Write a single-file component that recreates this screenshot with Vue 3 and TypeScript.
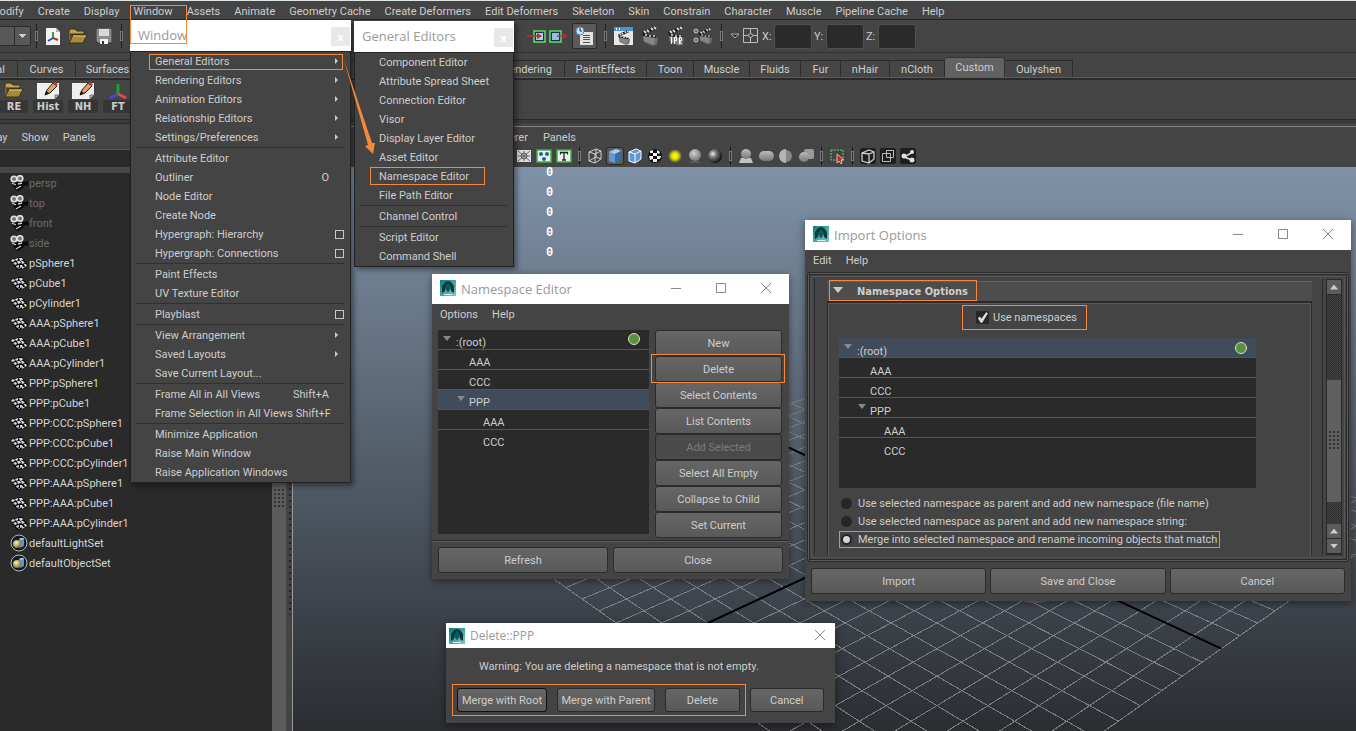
<script setup lang="ts">
import { ref } from 'vue'

interface MenuEntry {
  label?: string
  key?: string
  sub?: boolean
  box?: boolean
}
interface TreeRow {
  label: string
  depth: number
  open?: boolean
  root?: boolean
}

const mainMenu: string[] = [
  'Modify', 'Create', 'Display', 'Window', 'Assets', 'Animate', 'Geometry Cache', 'Create Deformers',
  'Edit Deformers', 'Skeleton', 'Skin', 'Constrain', 'Character', 'Muscle', 'Pipeline Cache', 'Help',
]
const shelfTabs: string[] = [
  'General', 'Curves', 'Surfaces', 'Rendering', 'PaintEffects', 'Toon', 'Muscle', 'Fluids', 'Fur',
  'nHair', 'nCloth', 'Custom', 'Oulyshen',
]

const windowMenu: MenuEntry[] = [
  { label: 'General Editors', sub: true },
  { label: 'Rendering Editors', sub: true },
  { label: 'Animation Editors', sub: true },
  { label: 'Relationship Editors', sub: true },
  { label: 'Settings/Preferences', sub: true },
  {},
  { label: 'Attribute Editor' },
  { label: 'Outliner', key: 'O' },
  { label: 'Node Editor' },
  { label: 'Create Node' },
  { label: 'Hypergraph: Hierarchy', box: true },
  { label: 'Hypergraph: Connections', box: true },
  {},
  { label: 'Paint Effects' },
  { label: 'UV Texture Editor' },
  {},
  { label: 'Playblast', box: true },
  {},
  { label: 'View Arrangement', sub: true },
  { label: 'Saved Layouts', sub: true },
  { label: 'Save Current Layout...' },
  {},
  { label: 'Frame All in All Views', key: 'Shift+A' },
  { label: 'Frame Selection in All Views', key: 'Shift+F' },
  {},
  { label: 'Minimize Application' },
  { label: 'Raise Main Window' },
  { label: 'Raise Application Windows' },
]
const editorsMenu: MenuEntry[] = [
  { label: 'Component Editor' },
  { label: 'Attribute Spread Sheet' },
  { label: 'Connection Editor' },
  { label: 'Visor' },
  { label: 'Display Layer Editor' },
  { label: 'Asset Editor' },
  { label: 'Namespace Editor' },
  { label: 'File Path Editor' },
  {},
  { label: 'Channel Control' },
  {},
  { label: 'Script Editor' },
  { label: 'Command Shell' },
]

const cameras: string[] = ['persp', 'top', 'front', 'side']
const meshes: string[] = [
  'pSphere1', 'pCube1', 'pCylinder1', 'AAA:pSphere1', 'AAA:pCube1', 'AAA:pCylinder1', 'PPP:pSphere1',
  'PPP:pCube1', 'PPP:CCC:pSphere1', 'PPP:CCC:pCube1', 'PPP:CCC:pCylinder1', 'PPP:AAA:pSphere1',
  'PPP:AAA:pCube1', 'PPP:AAA:pCylinder1',
]
const sets: string[] = ['defaultLightSet', 'defaultObjectSet']

const tree: TreeRow[] = [
  { label: ':(root)', depth: 0, open: true, root: true },
  { label: 'AAA', depth: 1 },
  { label: 'CCC', depth: 1 },
  { label: 'PPP', depth: 1, open: true },
  { label: 'AAA', depth: 2 },
  { label: 'CCC', depth: 2 },
]
const editorSelected = ref(3)
const importSelected = ref(0)

const editorButtons: string[] = [
  'New', 'Delete', 'Select Contents', 'List Contents', 'Add Selected', 'Select All Empty',
  'Collapse to Child', 'Set Current',
]
const importModes: string[] = [
  'Use selected namespace as parent and add new namespace (file name)',
  'Use selected namespace as parent and add new namespace string:',
  'Merge into selected namespace and rename incoming objects that match',
]
const importMode = ref(2)
const useNamespaces = ref(true)

/* Ground grid: unit square [-1, 1] seen through the perspective camera. */
const CELLS = 12
function project(u: number, v: number): string {
  const w = 1 - 0.17 * (u + v)
  const x = 644 + (236 * (u - v)) / w
  const y = (516.5 + 21.9 * (u + v)) / w - 167
  return `${x.toFixed(1)} ${y.toFixed(1)}`
}
function buildGrid(): string {
  let d = ''
  for (let i = -CELLS; i <= CELLS; i++) {
    if (i === 0) continue
    const t = i / CELLS
    d += `M${project(t, -1)}L${project(t, 1)}M${project(-1, t)}L${project(1, t)}`
  }
  return d
}
const gridPath = buildGrid()
const axisPath = `M${project(0, -1)}L${project(0, 1)}M${project(-1, 0)}L${project(1, 0)}`
</script>

<template>
  <div class="app">
    <svg class="defs" width="0" height="0" aria-hidden="true">
      <defs>
        <linearGradient id="teal" x1="0" y1="0" x2="1" y2="1">
          <stop offset="0" stop-color="#0a7f7d" />
          <stop offset="1" stop-color="#7cc9c4" />
        </linearGradient>
        <radialGradient id="ballGrey" cx="0.4" cy="0.35" r="0.65">
          <stop offset="0" stop-color="#d0d0d0" />
          <stop offset="1" stop-color="#777" />
        </radialGradient>
        <radialGradient id="ballDark" cx="0.35" cy="0.35" r="0.65">
          <stop offset="0" stop-color="#eee" />
          <stop offset="0.4" stop-color="#777" />
          <stop offset="1" stop-color="#161616" />
        </radialGradient>
        <radialGradient id="glow">
          <stop offset="0" stop-color="#ffff30" />
          <stop offset="0.45" stop-color="#e6e000" />
          <stop offset="1" stop-color="#e6e000" stop-opacity="0" />
        </radialGradient>
        <radialGradient id="gold" cx="0.4" cy="0.35" r="0.65">
          <stop offset="0" stop-color="#fff3c0" />
          <stop offset="1" stop-color="#8a6f2c" />
        </radialGradient>
        <linearGradient id="paleFade" x1="0" y1="0" x2="0" y2="1">
          <stop offset="0" stop-color="#bbb" />
          <stop offset="1" stop-color="#777" />
        </linearGradient>
        <symbol id="maya" viewBox="0 0 16 16">
          <rect width="16" height="16" fill="url(#teal)" />
          <path d="M2 13V6l3-4 3-1 3 1 3 4v7l-3-2V8L8 12 5 8v3z" fill="#06393c" />
          <path d="M5 7l3-4 3 4-3 5z" fill="#0b5c5c" />
          <path d="M4 14.500h8" stroke="#d9f0ee" stroke-width="1" />
        </symbol>
        <symbol id="clap" viewBox="0 0 18 20">
          <path d="M2 9l12 2 3 1-1 6-4 2-9-4z" fill="#6d6d6d" />
          <path d="M2 9l12 2-1 8-10-4z" fill="#858585" />
          <path d="M1 6L14 0l2 3L2 9z" fill="#1c1c1c" />
          <path d="M3 5l2 2M6 4l2 2M10 2l2 2M13 1l2 2" stroke="#ddd" stroke-width="1.800" />
          <path d="M2 9l13 2" stroke="#1c1c1c" stroke-width="2" />
          <path d="M4 9h2M8 10h2M12 10h2" stroke="#ddd" stroke-width="1.500" />
        </symbol>
        <symbol id="folder" viewBox="0 0 20 16">
          <path d="M1 3l1-2h5l2 2h7v3H1z" fill="#c2a24a" stroke="#3b3012" />
          <path d="M1 14V4h1l1 8z" fill="#80652a" />
          <path d="M1 15l4-8h14l-4 8z" fill="#a88a3a" stroke="#3b3012" />
          <path d="M5 8h13" stroke="#e2cb7c" />
        </symbol>
        <symbol id="note" viewBox="0 0 24 18">
          <path d="M1 1h22v12l-4 4H1z" fill="#efefef" />
          <path d="M19 17v-4h4z" fill="#bbb" stroke="#555" stroke-width="0.700" />
          <path d="M9 13l2-5 6-7 4 3-7 7z" fill="#dda066" stroke="#2d1c10" />
          <path d="M17 1l3 3 2-2-3-2z" fill="#c43a3a" />
          <path d="M9 13l1-4 3 2z" fill="#111" />
        </symbol>
        <symbol id="cam" viewBox="0 0 18 16">
          <path d="M5 6l9 1 4-1v5l-3-1-2 3-5 3-3-2-2-5z" fill="#0a0a0a" />
          <circle cx="4" cy="4" r="2.800" fill="#777" stroke="#e2e2e2" stroke-width="1.600" />
          <circle cx="10" cy="3.500" r="2.800" fill="#777" stroke="#e2e2e2" stroke-width="1.600" />
          <path d="M2 8l4 2M8 9l4-1M6 14l5-3" stroke="#ccc" stroke-width="1.300" />
        </symbol>
        <symbol id="mesh" viewBox="0 0 18 13">
          <path d="M0 3L9 0h3l6 8-2 3-9 2z" fill="#0b0b0b" />
          <path d="M1 3l3-1 1 2-3 1zM5 2l3-1v2l-2 1zM9 1l3 0 1 2-3 1zM3 6l3-1 1 2-2 1zM7 4l3 0 1 2-3 1zM11 4l2 0 2 2-3 1zM6 9l3-1 0 2-2 1zM10 8l2 0 1 2-3 1zM14 7l2 0 1 2-2 1zM8 11l2 0-1 1zM12 10l3 0-3 2z" fill="#d6d6d6" />
        </symbol>
        <symbol id="set" viewBox="0 0 18 18">
          <circle cx="9" cy="9" r="8" fill="#151b24" stroke="#b9b9b9" />
          <path d="M9 5l5-1v8l-4 2z" fill="#5d93cf" />
          <path d="M9 5l3 1 2-2-3 0z" fill="#b5d5f2" />
          <circle cx="7" cy="10" r="4" fill="url(#gold)" />
        </symbol>
      </defs>
    </svg>

    <nav class="menubar">
      <button v-for="m in mainMenu" :key="m" type="button">{{ m }}</button>
    </nav>

    <div class="toolbar">
      <div class="tools-left">
        <select class="mode" aria-label="Menu set"><option></option></select>
        <i class="grip"></i>
        <button type="button" aria-label="New scene">
          <svg width="14" height="18" viewBox="0 0 14 18">
            <path d="M0 1h10l4 4v13H0z" fill="#f3f3f3" />
            <path d="M10 1v4h4z" fill="#b5b5b5" />
            <path d="M7 11V5" stroke="#2ea52e" stroke-width="2" />
            <path d="M7 11l-5 3" stroke="#2a4fd0" stroke-width="2" />
            <path d="M7 11l5 2" stroke="#d22" stroke-width="2" />
          </svg>
        </button>
        <button type="button" aria-label="Open scene"><svg width="20" height="16"><use href="#folder" /></svg></button>
        <button type="button" aria-label="Save scene">
          <svg width="16" height="16" viewBox="0 0 16 16">
            <path d="M1 0h14l1 1v14H1l-1-2V1z" fill="#8b8b8b" stroke="#333" />
            <path d="M3 1h10v7H3z" fill="#d8d8d8" />
            <path d="M4 11h8v5H4z" fill="#f4f4f4" />
            <path d="M6 13h2v3H6z" fill="#333" />
          </svg>
        </button>
        <i class="grip"></i>
      </div>
      <div class="tools-right">
        <button type="button" aria-label="Inputs">
          <svg width="19" height="14" viewBox="0 0 19 14">
            <path d="M7 2h11v11H7z" fill="#16324a" stroke="#5fe05f" stroke-width="1.500" />
            <path d="M9 4h7v7H9z" fill="#a9d0f2" />
            <path d="M0 7h12" stroke="#b33" stroke-width="1.500" />
            <path d="M10 4l5 3-5 3z" fill="#c22" />
          </svg>
        </button>
        <button type="button" aria-label="Outputs">
          <svg width="20" height="14" viewBox="0 0 20 14">
            <path d="M1 2h11v11H1z" fill="#16324a" stroke="#5fe05f" stroke-width="1.500" />
            <path d="M3 4h7v7H3z" fill="#8fc0ee" />
            <path d="M8 7h8" stroke="#b33" stroke-width="1.500" />
            <path d="M14 4l5 3-5 3z" fill="#c22" />
          </svg>
        </button>
        <button type="button" class="pressed" aria-label="Construction history">
          <svg width="19" height="20" viewBox="0 0 19 20">
            <path d="M5 6h13v13H5z" fill="#e2e2e2" />
            <path d="M8 9.500h7M8 11.500h7M8 13.500h7M8 16.500h7" stroke="#555" />
            <circle cx="5" cy="5" r="4" fill="#c9e0f5" stroke="#5b88b5" />
            <path d="M5 2v3h2" stroke="#234" fill="none" />
          </svg>
        </button>
        <i class="grip"></i>
        <button type="button" aria-label="Render view">
          <svg width="19" height="18" viewBox="0 0 19 18">
            <path d="M0 0h19v18H0z" fill="#e8e8e8" />
            <path d="M0 0h19v4H0z" fill="#4f94cf" />
            <path d="M2 2h1M5 2h1" stroke="#fff" stroke-width="2" />
            <use href="#clap" x="3" y="3" width="14" height="15" />
          </svg>
        </button>
        <button type="button" class="clap" aria-label="Render frame"><svg width="18" height="20"><use href="#clap" /></svg></button>
        <button type="button" class="clap" aria-label="IPR render">
          <svg width="18" height="20">
            <use href="#clap" />
            <path d="M4.500 11v7M7.500 18v-6.500h2v3h-2M12.500 18v-6.500h2v3h-2l2 4" stroke="#fff" fill="none" />
          </svg>
        </button>
        <button type="button" class="clap" aria-label="Render settings">
          <svg width="20" height="20" viewBox="0 0 20 20">
            <use href="#clap" x="5" width="15" height="20" />
            <circle cx="3" cy="5" r="2" fill="#666" stroke="#ccc" />
            <circle cx="3" cy="14" r="2" fill="#666" stroke="#ccc" />
          </svg>
        </button>
        <i class="grip"></i>
        <button type="button" aria-label="Input mode">
          <svg width="29" height="16" viewBox="0 0 29 16">
            <path d="M1 6h8l-4 4z" fill="#333" stroke="#aaa" />
            <path d="M13.500.500h14v14h-14zM20.500 0v5M20.500 10v5M13 7.500h5M23 7.500h5" fill="none" stroke="#bbb" />
            <circle cx="20.500" cy="7.500" r="2" fill="none" stroke="#bbb" />
          </svg>
        </button>
        <div class="coords">
          <label for="cx">X:</label><input id="cx" type="text" />
          <label for="cy">Y:</label><input id="cy" type="text" />
          <label for="cz">Z:</label><input id="cz" type="text" />
        </div>
      </div>
    </div>

    <div class="tabs">
      <button v-for="t in shelfTabs" :key="t" type="button" :class="{ on: t === 'Custom' }">{{ t }}</button>
    </div>

    <div class="shelf">
      <button type="button"><svg width="20" height="18"><use href="#folder" /></svg><b>RE</b></button>
      <button type="button"><svg width="24" height="18"><use href="#note" /></svg><b>Hist</b></button>
      <button type="button"><svg width="24" height="18"><use href="#note" /></svg><b>NH</b></button>
      <button type="button">
        <svg width="20" height="18" viewBox="0 0 20 18">
          <path d="M10 12L2 16" stroke="#3e49d8" stroke-width="3" />
          <path d="M10 12l8 4" stroke="#e04848" stroke-width="3" />
          <path d="M10 12V2" stroke="#17a32a" stroke-width="3" />
        </svg>
        <b>FT</b>
      </button>
    </div>

    <div class="work">
      <aside class="outliner">
        <nav class="panel-menu">
          <button type="button">Display</button><button type="button">Show</button><button type="button">Panels</button>
        </nav>
        <input class="search" type="text" aria-label="Filter" />
        <div class="out-body">
          <ul>
            <li v-for="c in cameras" :key="c" class="dim"><svg width="18" height="16"><use href="#cam" /></svg>{{ c }}</li>
            <li v-for="m in meshes" :key="m"><svg width="18" height="13"><use href="#mesh" /></svg>{{ m }}</li>
            <li v-for="s in sets" :key="s"><svg width="18" height="18"><use href="#set" /></svg>{{ s }}</li>
          </ul>
          <div class="out-scroll"><i class="dots"></i></div>
          <div class="splitter"><i></i></div>
        </div>
      </aside>

      <main class="viewport">
        <nav class="view-menu">
          <button type="button">Renderer</button><button type="button">Panels</button>
        </nav>
        <div class="view-icons">
          <svg width="16" height="16" viewBox="0 0 16 16">
            <path d="M1 2h14v12H1z" fill="#ddd" />
            <path d="M2 3l12 10M14 3L2 13M8 3v10M2 8h12" stroke="#555" stroke-width="0.800" />
            <circle cx="8" cy="8" r="3" fill="none" stroke="#444" stroke-width="0.800" />
          </svg>
          <svg width="16" height="16" viewBox="0 0 16 16">
            <path d="M1 2h14v12H1z" fill="#e8f0f8" stroke="#3fae3f" stroke-width="1.500" />
            <circle cx="5" cy="6" r="2" fill="#2b5f95" /><circle cx="11" cy="6" r="2" fill="#2b5f95" /><circle cx="8" cy="11" r="2" fill="#2b5f95" />
          </svg>
          <svg width="16" height="16" viewBox="0 0 16 16">
            <path d="M1 2h14v12H1z" fill="#eee" stroke="#3fae3f" stroke-width="1.500" />
            <path d="M4.500 6.500v-2h7v2M8 4.500v7M6 12h4" fill="none" stroke="#222" stroke-width="1.300" />
          </svg>
          <i class="grip"></i>
          <svg width="16" height="16" viewBox="0 0 16 16">
            <path d="M2 4l7-3 5 2v8l-6 4-6-2zM2 4l6 2 6-3M8 6v9M9 1v8l-7 4M9 9l5 2" fill="none" stroke="#d0d0d0" />
          </svg>
          <svg class="boxed" width="16" height="16" viewBox="0 0 16 16">
            <path d="M2 4l7-3 5 2v8l-6 4-6-2z" fill="#5f98d2" />
            <path d="M2 4l7-3 5 2-6 3z" fill="#a9cdf0" />
            <path d="M8 6l6-3v8l-6 4z" fill="#3a6da3" />
          </svg>
          <svg width="16" height="16" viewBox="0 0 16 16">
            <path d="M2 4l7-3 5 2v8l-6 4-6-2z" fill="#5f98d2" stroke="#fff" />
            <path d="M2 4l6 2 6-3M8 6v9" fill="none" stroke="#fff" />
          </svg>
          <svg width="16" height="16" viewBox="0 0 16 16">
            <circle cx="8" cy="8" r="7" fill="#111" />
            <path d="M6 5h4v3H6zM3 3l3-1 0 3-3 0zM10 2l3 2-1 2-2-1zM2 8h4v3l-3 1zM10 8h4l-1 3-3 0zM6 11h4v3H6z" fill="#f3f3f3" />
          </svg>
          <svg width="16" height="16"><circle cx="8" cy="8" r="7" fill="url(#glow)" /></svg>
          <svg width="16" height="16"><circle cx="8" cy="7" r="6" fill="url(#ballGrey)" /><ellipse cx="8" cy="14" rx="6" ry="1" fill="#5a5a5a" /></svg>
          <svg width="16" height="16"><circle cx="8" cy="8" r="7" fill="url(#ballDark)" /></svg>
          <i class="grip"></i>
          <svg width="16" height="16"><path d="M1 15l2-5h10l2 5z" fill="#c4c4c4" /><circle cx="8" cy="6" r="5" fill="url(#paleFade)" /></svg>
          <svg width="16" height="16"><rect x="1" y="3" width="15" height="10" rx="5" fill="url(#paleFade)" /></svg>
          <svg width="16" height="16"><circle cx="8" cy="8" r="6" fill="#888" /><path d="M8 1v14a7 7 0 0 1 0-14z" fill="#b5b5b5" /></svg>
          <svg width="16" height="16"><rect x="6" y="1" width="10" height="10" rx="2" fill="#999" /><circle cx="6" cy="9" r="5" fill="url(#paleFade)" /></svg>
          <i class="grip"></i>
          <svg width="16" height="16"><path d="M2 2h12v10H2z" fill="none" stroke="#5fd35f" stroke-dasharray="2 1" /><path d="M8 6v9l2-2 2 3 1-1-1-3h3z" fill="#c22" stroke="#eee" stroke-width="0.700" /></svg>
          <i class="grip"></i>
          <svg class="dark" width="16" height="16"><path d="M2 5l7-3 5 2v7l-5 4-7-2zM2 5l7 1 5-2M9 6v9" fill="none" stroke="#ccc" stroke-width="1.300" /></svg>
          <svg class="dark" width="16" height="16"><path d="M6.500 2.500h7v7h-7zM2.500 5.500h8v8h-8z" fill="none" stroke="#bbb" /></svg>
          <svg class="dark" width="16" height="16"><path d="M13 4L4 9l8 3" fill="none" stroke="#ddd" stroke-width="1.500" /><circle cx="12" cy="4" r="2" fill="#ddd" /><circle cx="4" cy="8" r="2.500" fill="#ddd" /><circle cx="12" cy="12" r="2.500" fill="#ddd" /></svg>
        </div>
        <div class="scene">
          <svg class="grid" width="100%" height="100%" aria-hidden="true">
            <path :d="gridPath" stroke="#7c7f82" stroke-width="1" fill="none" shape-rendering="crispEdges" />
            <path :d="axisPath" stroke="#000" stroke-width="2" fill="none" />
            <ellipse cx="742" cy="433" rx="13" ry="3" fill="#6a635c" />
          </svg>
          <ol class="hud"><li v-for="n in 5" :key="n">0</li></ol>
        </div>
      </main>
    </div>

    <section class="popup popup-window">
      <header>Window<button type="button" aria-label="Close menu">x</button></header>
      <ul>
        <template v-for="(e, i) in windowMenu" :key="i">
          <li v-if="e.label">
            <button type="button">
              <span>{{ e.label }}</span>
              <kbd v-if="e.key">{{ e.key }}</kbd>
              <i v-if="e.sub" class="arrow"></i>
              <i v-if="e.box" class="optbox"></i>
            </button>
          </li>
          <li v-else class="rule"></li>
        </template>
      </ul>
    </section>

    <section class="popup popup-editors">
      <header>General Editors<button type="button" aria-label="Close menu">x</button></header>
      <ul>
        <template v-for="(e, i) in editorsMenu" :key="i">
          <li v-if="e.label"><button type="button"><span>{{ e.label }}</span></button></li>
          <li v-else class="rule"></li>
        </template>
      </ul>
    </section>

    <section class="win ns">
      <header>
        <svg width="16" height="16"><use href="#maya" /></svg>
        <h2>Namespace Editor</h2>
        <button type="button" aria-label="Minimize"><svg width="11" height="11"><path d="M0 5.500h10" /></svg></button>
        <button type="button" aria-label="Maximize"><svg width="11" height="11"><path d="M.500.500h9v9h-9z" /></svg></button>
        <button type="button" aria-label="Close"><svg width="11" height="11"><path d="M0 0l10 10M10 0L0 10" /></svg></button>
      </header>
      <nav class="win-menu"><button type="button">Options</button><button type="button">Help</button></nav>
      <div class="ns-body">
        <ul class="tree">
          <li v-for="(r, i) in tree" :key="i" :class="['d' + r.depth, { sel: i === editorSelected }]" @click="editorSelected = i">
            <button v-if="r.open" type="button" class="twist" aria-label="Collapse"></button>
            <span>{{ r.label }}</span>
            <i v-if="r.root" class="green"></i>
          </li>
        </ul>
        <div class="ns-actions">
          <button v-for="b in editorButtons" :key="b" type="button" class="btn" :disabled="b === 'Add Selected'">{{ b }}</button>
        </div>
      </div>
      <footer><button type="button" class="btn">Refresh</button><button type="button" class="btn">Close</button></footer>
    </section>

    <section class="win imp">
      <header>
        <svg width="16" height="16"><use href="#maya" /></svg>
        <h2>Import Options</h2>
        <button type="button" aria-label="Minimize"><svg width="11" height="11"><path d="M0 5.500h10" /></svg></button>
        <button type="button" aria-label="Maximize"><svg width="11" height="11"><path d="M.500.500h9v9h-9z" /></svg></button>
        <button type="button" aria-label="Close"><svg width="11" height="11"><path d="M0 0l10 10M10 0L0 10" /></svg></button>
      </header>
      <nav class="win-menu"><button type="button">Edit</button><button type="button">Help</button></nav>
      <div class="frame">
        <div class="frame-in">
          <div class="pane">
            <button type="button" class="fold"><i></i>Namespace Options</button>
            <div class="fold-body">
              <label class="check"><input v-model="useNamespaces" type="checkbox" />Use namespaces</label>
              <ul class="tree">
                <li v-for="(r, i) in tree" :key="i" :class="['d' + r.depth, { sel: i === importSelected }]" @click="importSelected = i">
                  <button v-if="r.open" type="button" class="twist" aria-label="Collapse"></button>
                  <span>{{ r.label }}</span>
                  <i v-if="r.root" class="green"></i>
                </li>
              </ul>
              <label v-for="(m, i) in importModes" :key="m" class="radio"><input v-model="importMode" type="radio" name="mode" :value="i" />{{ m }}</label>
            </div>
          </div>
          <div class="scroll">
            <button type="button" class="up" aria-label="Scroll up"></button>
            <div class="track"></div>
            <div class="thumb"><i class="dots"></i></div>
            <div class="track short"></div>
            <button type="button" class="up" aria-label="Scroll up"></button>
            <button type="button" class="down" aria-label="Scroll down"></button>
          </div>
        </div>
      </div>
      <footer>
        <button type="button" class="btn">Import</button><button type="button" class="btn">Save and Close</button><button type="button" class="btn">Cancel</button>
      </footer>
    </section>

    <section class="win del">
      <header>
        <svg width="16" height="16"><use href="#maya" /></svg>
        <h2>Delete::PPP</h2>
        <button type="button" aria-label="Close"><svg width="11" height="11"><path d="M0 0l10 10M10 0L0 10" /></svg></button>
      </header>
      <p>Warning: You are deleting a namespace that is not empty.</p>
      <footer>
        <button type="button" class="btn focus">Merge with Root</button>
        <button type="button" class="btn wide">Merge with Parent</button>
        <button type="button" class="btn">Delete</button>
        <button type="button" class="btn">Cancel</button>
      </footer>
    </section>

    <svg class="marks" width="100%" height="100%" aria-hidden="true">
      <g fill="none" stroke="#f5893b">
        <rect x="130.500" y="5.500" width="56" height="38" />
        <rect x="149.500" y="54.500" width="193" height="15" />
        <rect x="370.500" y="167.500" width="114" height="17" />
        <rect x="651.500" y="354.500" width="133" height="28" />
        <rect x="829.500" y="280.500" width="147" height="20" />
        <rect x="962.500" y="305.500" width="124" height="24" />
        <rect x="839.500" y="531.500" width="380" height="16" />
        <rect x="452.500" y="684.500" width="293" height="31" />
      </g>
      <path d="M344 60L372 143L375 143L373 154L365 146L368 145Z" fill="#f5893b" />
    </svg>
  </div>
</template>

<style>
body { margin: 0; background: #444; }
</style>

<style scoped>
.app {
  position: relative;
  display: flex;
  flex-direction: column;
  height: 100vh;
  overflow: hidden;
  box-sizing: border-box;
  border-top: 1px solid #dfe6e6;
  background: #444;
  color: #cdcdcd;
  font: 11px/19px Roboto, "Liberation Sans", sans-serif;
}
.app *, .app *::before { box-sizing: border-box; }
.defs, .marks { position: absolute; }
.marks { left: 0; top: -1px; height: 100vh; pointer-events: none; }
button, input, select { font: inherit; color: inherit; margin: 0; }
button { display: block; padding: 0; border: 0; background: none; white-space: nowrap; }
ul, ol, h2, p { margin: 0; padding: 0; list-style: none; font-weight: normal; }
svg { display: block; flex: none; }

.menubar {
  display: flex;
  gap: 14px;
  height: 19px;
  line-height: 20px;
  flex: none;
  padding-top: 1px;
  border-bottom: 1px solid #262626;
}
.menubar button:first-child { margin-left: -10px; }

.toolbar { display: flex; align-items: center; height: 33px; flex: none; border-bottom: 1px solid #333; }
.tools-left { display: flex; align-items: center; gap: 8px; flex: 0 0 527px; }
.tools-left .grip { margin: 0 -2px; }
.mode {
  appearance: none;
  width: 31px;
  height: 20px;
  margin-right: -4px;
  border: 1px solid #2b2b2b;
  border-left: 0;
  border-radius: 0 2px 2px 0;
  background:
    linear-gradient(45deg, transparent 50%, #ccc 50%) 18px 7px / 4px 4px no-repeat,
    linear-gradient(-45deg, transparent 50%, #ccc 50%) 22px 7px / 4px 4px no-repeat,
    linear-gradient(#2b2b2b, #2b2b2b) 14px 0 / 1px 100% no-repeat,
    #585858;
}
.grip { display: block; flex: none; width: 7px; height: 24px; background: linear-gradient(#1e1e1e, #1e1e1e) 3px 0 / 1px 100% no-repeat; position: relative; }
.grip::before { content: ""; position: absolute; left: 2px; top: 7px; width: 3px; height: 10px; border: 1px solid #777; background: #333; }
.tools-right { display: flex; align-items: center; gap: 3px; }
.tools-right .grip { margin: 0 2px; }
.clap { margin-left: 5px; }
.pressed { padding: 2px; border: 1px solid #2a2a2a; border-radius: 2px; background: #5a5a5a; }
.coords { display: flex; align-items: center; gap: 2px; }
.coords label { width: 10px; }
.coords input { width: 38px; height: 25px; border: 1px solid #505050; border-radius: 3px; background: #2a2a2a; }

.tabs { display: grid; grid-template-columns: 18px 58px 64px 425px 82px 47px 56px 51px 40px 49px 55px 60px 68px; align-items: end; height: 25px; flex: none; border-bottom: 1px solid #5c5c5c; padding-top: 4px; }
.tabs button { height: 17px; line-height: 18px; border: 1px solid #2c2c2c; border-left-width: 0; border-bottom: 0; background: #464646; overflow: hidden; text-align: center; }
.tabs button:nth-child(1), .tabs button:nth-child(4) { display: flex; justify-content: flex-end; padding-right: 12px; }
.tabs button.on { height: 20px; line-height: 20px; border-radius: 3px 3px 0 0; border-color: #333; background: #626262; }

.shelf { display: flex; gap: 5px; height: 42px; flex: none; border-top: 2px solid #2a2a2a; border-bottom: 1px solid #2a2a2a; padding-top: 2px; }
.shelf button { display: flex; flex-direction: column; align-items: center; width: 30px; }
.shelf button:first-child { width: 28px; }
.shelf button:first-child svg { height: 16px; margin-bottom: 2px; }
.shelf b { width: 100%; border-radius: 2px; background: #363636; font: bold 11px/13px "DejaVu Sans Condensed", "DejaVu Sans", sans-serif; }

.work { display: flex; flex: 1; min-height: 0; border-top: 3px solid #3a3a3a; }
.outliner { display: flex; flex-direction: column; flex: 0 0 293px; border-top: 1px solid #2a2a2a; }
.panel-menu { display: flex; gap: 14px; height: 26px; line-height: 26px; padding-top: 1px; flex: none; border-bottom: 1px solid #555; }
.panel-menu button:first-child { margin-left: -28px; }
.search { width: 100%; height: 17px; border: 0; background: #2a2a2a; }
.out-body { display: flex; flex: 1; min-height: 0; border-top: 6px solid #464646; background: #2a2a2a; }
.out-body ul { flex: 1; }
.out-body li { display: flex; align-items: center; gap: 1px; height: 20px; padding-left: 10px; color: #d4d4d4; }
.out-body li.dim { color: #6a6a6a; }
.out-scroll { width: 14px; background: #5c5c5c; padding: 316px 2px 0; }
.dots { display: block; height: 20px; background: radial-gradient(circle at 1px 1px, #333 1px, transparent 1px) 0 0 / 4px 4px; }
.splitter { width: 7px; background: #444; border-right: 1px solid #999; padding: 309px 0 0 3px; }
.splitter i { display: block; width: 3px; height: 133px; background: radial-gradient(circle at 1px 1px, #222 1px, transparent 1px) 0 0 / 4px 6px; }

.viewport { display: flex; flex-direction: column; flex: 1; min-width: 0; border-top: 1px solid #858585; margin-top: 3px; }
.view-menu { display: flex; gap: 15px; height: 19px; line-height: 20px; padding-top: 1px; flex: none; padding-left: 191px; }
.view-icons { display: flex; align-items: center; gap: 4px; height: 21px; padding-bottom: 1px; flex: none; padding-left: 223px; }
.view-icons .grip { height: 18px; }
.view-icons .grip::before { top: 4px; }
.boxed { background: #5c5c5c; outline: 1px solid #2a2a2a; border-radius: 2px; }
.dark { background: #1e1e1e; border-radius: 2px; }
.scene { position: relative; flex: 1; overflow: hidden; background: linear-gradient(#7f92a8, #2b2d31); }
.grid { position: absolute; left: 0; top: 0; }
.hud { padding: 0 0 0 253px; margin-top: -4px; color: #fff; font: bold 12px/20px "Liberation Mono", monospace; }

.popup { position: absolute; box-shadow: 3px 3px 5px rgba(0, 0, 0, 0.4); }
.popup header { display: flex; align-items: center; justify-content: space-between; height: 31px; padding: 0 1px 2px 8px; background: #fff; color: #999; font: 13px/28px "Open Sans", "Noto Sans", sans-serif; }
.popup header button { width: 19px; height: 19px; margin-top: 4px; background: #e8e8e8; color: #fff; font: bold 11px/17px "Open Sans", sans-serif; }
.popup ul { border: 1px solid #222; background: #444; }
.popup li button { display: flex; align-items: center; width: 100%; height: 19px; padding: 0 6px 0 24px; text-align: left; }
.popup li span { flex: 1; }
.popup kbd { font: inherit; margin: 0 15px 0 3px; }
.popup .rule { height: 2px; margin: 0 6px 0 5px; border-top: 1px solid #303030; }
.arrow { width: 0; height: 0; margin: 0 6px 2px 0; border: 3px solid transparent; border-left-color: #ccc; border-right: 0; }
.optbox { width: 9px; height: 9px; border: 1px solid #c8c8c8; }
.popup-window { left: 130px; top: 19px; width: 221px; }
.popup-editors { left: 354px; top: 20px; width: 160px; }

.win { position: absolute; display: flex; flex-direction: column; background: #444; box-shadow: 0 2px 8px rgba(0, 0, 0, 0.45); }
.win header { display: flex; align-items: center; height: 30px; flex: none; padding: 0 17px 1px 8px; background: #fff; color: #999; }
.win header h2 { flex: 1; margin-left: 5px; font: 13px/28px "Open Sans", "Noto Sans", sans-serif; }
.win header > svg { margin-bottom: 1px; }
.win header button { margin-left: 34px; }
.win header button path { fill: none; stroke: #888; }
.win-menu { display: flex; gap: 14px; height: 20px; flex: none; padding: 1px 0 0 8px; line-height: 20px; }
.btn { border: 1px solid #2b2b2b; border-radius: 3px; background: linear-gradient(#666, #595959); color: #cdcdcd; text-align: center; }
.btn:disabled { background: #4a4a4a; color: #7a7a7a; }
.win footer { display: flex; }
.tree { background: #2a2a2a; }
.tree li { position: relative; display: flex; align-items: center; height: 20px; padding: 6px 9px 0 18px; border-bottom: 1px solid #555; line-height: 14px; }
.tree li:last-child { border-bottom: 0; }
.tree li span { flex: 1; }
.tree .d1 { padding-left: 31px; }
.tree .d2 { padding-left: 45px; }
.tree .sel { background: #414c5a; border-color: #4b5460; }
.twist { position: absolute; top: 6px; left: 5px; width: 8px; height: 5px; background: #888; clip-path: polygon(0 0, 100% 0, 50% 100%); }
.d1 .twist { left: 19px; }
.green { width: 12px; height: 12px; margin: -1px 0 7px; border: 1px solid #ddd; border-radius: 50%; background: #5a9138; }

.ns { left: 432px; top: 273px; width: 357px; }
.ns-body { display: grid; grid-template-columns: 211px 1fr; gap: 6px; padding: 6px 7px 2px 6px; }
.ns-body .tree { height: 204px; }
.ns-actions .btn { width: 100%; height: 26px; }
.ns footer { gap: 5px; padding: 6px 6px; border-top: 1px solid #2a2a2a; box-shadow: inset 0 1px #5c5c5c; }
.ns footer .btn { flex: 1; height: 26px; }

.imp { left: 805px; top: 219px; width: 546px; }
.frame { margin: 2px 2px 6px; border: 1px solid #2a2a2a; border-radius: 3px; padding: 1px; box-shadow: inset 0 0 0 1px #5a5a5a; }
.frame-in { display: flex; border: 1px solid #2a2a2a; outline: 1px solid #555; outline-offset: -3px; padding: 4px; }
.pane { flex: 1; height: 276px; overflow: hidden; padding: 2px 10px 0 12px; border-left: 1px solid #2a2a2a; border-right: 1px solid #2a2a2a; }
.fold { display: flex; align-items: center; width: 100%; height: 20px; border-top: 1px solid #606060; background: #4d4d4d; font: bold 11px/19px "DejaVu Sans Condensed", "DejaVu Sans", sans-serif; }
.fold i { width: 10px; height: 6px; margin: 0 14px 3px 6px; background: #ccc; clip-path: polygon(0 0, 100% 0, 50% 100%); }
.fold-body { height: 270px; border: 1px solid #2a2a2a; border-top-width: 2px; box-shadow: inset 0 0 0 1px #5a5a5a; padding: 5px 55px 0 11px; }
.check { display: flex; align-items: center; gap: 4px; height: 19px; margin: 0 0 11px 137px; }
.check input { appearance: none; width: 13px; height: 13px; border-radius: 2px; background: #262626; }
.check input:checked::before { content: ""; display: block; width: 13px; height: 13px; background: #ddd; clip-path: polygon(15% 55%, 30% 42%, 42% 60%, 78% 10%, 92% 18%, 48% 90%, 36% 90%); }
.imp .tree { height: 150px; margin-bottom: 6px; }
.imp .tree li { padding-top: 8px; }
.radio { display: flex; align-items: center; gap: 6px; height: 18px; padding-left: 2px; white-space: nowrap; }
.radio input { appearance: none; width: 11px; height: 11px; border-radius: 50%; background: #262626; flex: none; }
.radio input:checked { background: #d5d5d5; border: 2px solid #262626; }
.scroll { display: flex; flex-direction: column; width: 16px; margin-left: 3px; border: 1px solid #2a2a2a; }
.track { flex: 1; background: repeating-conic-gradient(#2c2c2c 0 25%, #464646 0 50%) 0 0 / 2px 2px; }
.track.short { flex: 0 0 22px; }
.thumb { display: flex; align-items: center; justify-content: center; height: 122px; background: #5f5f5f; }
.thumb .dots { width: 11px; }
.up, .down { display: flex; align-items: center; justify-content: center; height: 15px; border-bottom: 1px solid #2a2a2a; background: #5c5c5c; }
.up::before, .down::before { content: ""; width: 8px; height: 5px; background: #ccc; clip-path: polygon(50% 0, 100% 100%, 0 100%); }
.down::before { clip-path: polygon(0 0, 100% 0, 50% 100%); }
.imp footer { gap: 4px; padding: 0 6px 7px; }
.imp footer .btn { flex: 1; height: 26px; }

.del { left: 446px; top: 622px; width: 389px; }
.del header { height: 25px; padding: 0 9px 0 3px; }
.del header > svg { margin: 0; }
.del header h2 { font-size: 12px; line-height: 24px; }
.del p { padding: 9px 33px 11px; line-height: 20px; }
.del footer { gap: 10px; padding: 0 11px 11px; }
.del .btn { flex: 1 1 74px; height: 24px; }
.del .btn.focus { flex: 0 0 90px; border-color: #111; }
.del .btn.wide { flex: 0 0 98px; }
</style>
